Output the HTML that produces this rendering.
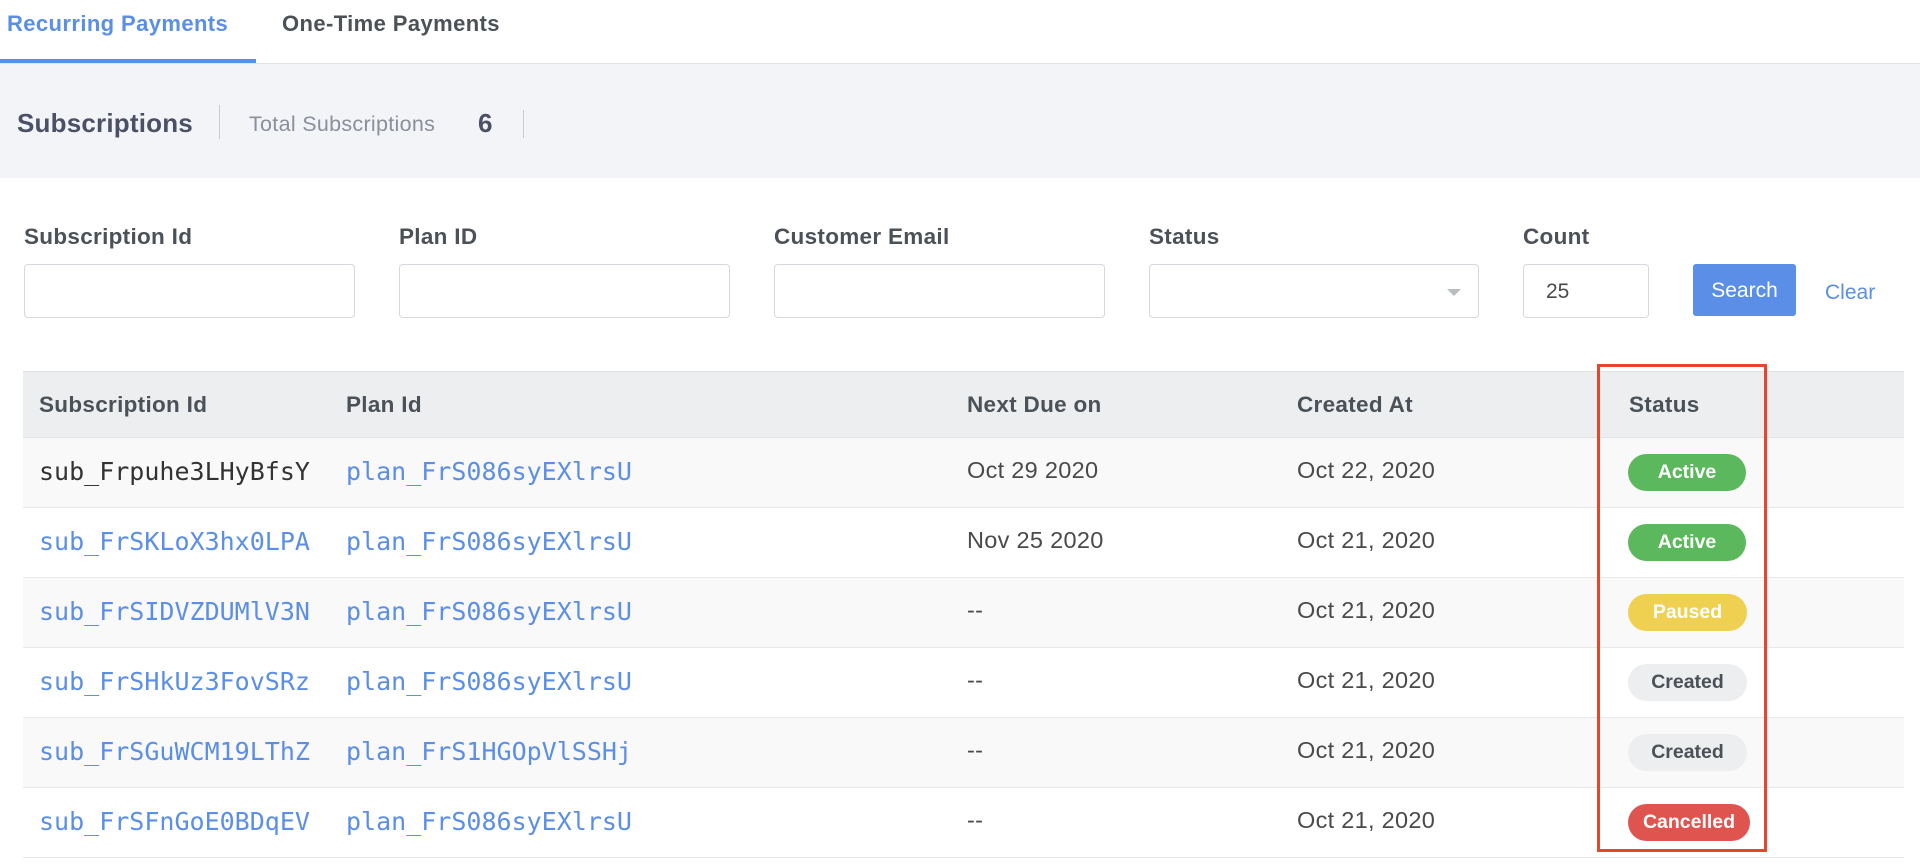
<!DOCTYPE html>
<html><head><meta charset="utf-8"><style>
*{box-sizing:border-box;margin:0;padding:0}
body{width:1920px;height:868px;background:#fff;font-family:"Liberation Sans",sans-serif;position:relative;overflow:hidden;color:#4b5157}
.a{position:absolute;white-space:nowrap}
.tab{font-size:22px;font-weight:bold;top:11px;letter-spacing:0.4px}
.lbl{font-size:22.5px;font-weight:bold;top:224px;color:#4b5157;letter-spacing:0.3px}
.inp{position:absolute;top:264px;height:54px;border:1px solid #d5d8dc;border-radius:4px;background:#fff}
.th{font-size:22.5px;font-weight:bold;color:#4b5157;top:392px;letter-spacing:0.3px}
.row{position:absolute;left:23px;width:1881px;height:70px;border-bottom:1px solid #e6e8ea}
.mono{font-family:"DejaVu Sans Mono","Liberation Mono",monospace;font-size:25px;color:#5b8ee6}
.txt{font-size:23.5px;color:#4a4a4a;letter-spacing:0.3px}
.badge{position:absolute;left:1628px;width:119px;height:37px;border-radius:19px;color:#fff;font-weight:bold;font-size:19.5px;text-align:center;line-height:37px}
</style></head><body>
<div class="a tab" style="left:7px;color:#5b8ee6">Recurring Payments</div>
<div class="a tab" style="left:282px;color:#4b5157">One-Time Payments</div>
<div class="a" style="left:0;top:59px;width:256px;height:4px;background:#5b8ee6"></div>
<div class="a" style="left:0;top:63px;width:1920px;height:1px;background:#e0e3e6"></div>
<div class="a" style="left:0;top:64px;width:1920px;height:114px;background:#f3f4f7"></div>
<div class="a" style="left:17px;top:108px;font-size:26px;font-weight:bold;color:#4c5066;letter-spacing:0.2px">Subscriptions</div>
<div class="a" style="left:219px;top:105px;width:1px;height:34px;background:#c8ccd0"></div>
<div class="a" style="left:249px;top:112px;font-size:21.5px;color:#8a8f99;letter-spacing:0.3px">Total Subscriptions</div>
<div class="a" style="left:478px;top:108px;font-size:26px;font-weight:bold;color:#4c5066">6</div>
<div class="a" style="left:523px;top:110px;width:1px;height:28px;background:#c8ccd0"></div>

<div class="a lbl" style="left:24px">Subscription Id</div>
<div class="a lbl" style="left:399px">Plan ID</div>
<div class="a lbl" style="left:774px">Customer Email</div>
<div class="a lbl" style="left:1149px">Status</div>
<div class="a lbl" style="left:1523px">Count</div>
<div class="inp" style="left:24px;width:331px"></div>
<div class="inp" style="left:399px;width:331px"></div>
<div class="inp" style="left:774px;width:331px"></div>
<div class="inp" style="left:1149px;width:330px"></div>
<div class="a" style="left:1447px;top:289px;width:0;height:0;border-left:7px solid transparent;border-right:7px solid transparent;border-top:7px solid #b9bcc0"></div>
<div class="inp" style="left:1523px;width:126px"></div>
<div class="a" style="left:1546px;top:280px;font-size:21px;color:#4a4a4a">25</div>
<div class="a" style="left:1693px;top:264px;width:103px;height:52px;background:#5b8ee6;border-radius:3px;color:#fff;font-size:21px;text-align:center;line-height:54px">Search</div>
<div class="a" style="left:1825px;top:281px;font-size:21px;color:#5b8ee6">Clear</div>

<div class="a" style="left:23px;top:371px;width:1881px;height:67px;background:#eceef0;border-top:1px solid #e0e3e6;border-bottom:1px solid #e0e3e6"></div>
<div class="a th" style="left:39px">Subscription Id</div>
<div class="a th" style="left:346px">Plan Id</div>
<div class="a th" style="left:967px">Next Due on</div>
<div class="a th" style="left:1297px">Created At</div>
<div class="a th" style="left:1629px">Status</div>

<div class="row" style="top:438px;background:#f9f9f9"></div>
<div class="row" style="top:508px;background:#fff"></div>
<div class="row" style="top:578px;background:#f9f9f9"></div>
<div class="row" style="top:648px;background:#fff"></div>
<div class="row" style="top:718px;background:#f9f9f9"></div>
<div class="row" style="top:788px;background:#fff"></div>

<div class="a mono" style="left:39px;top:457px;color:#333">sub_Frpuhe3LHyBfsY</div>
<div class="a mono" style="left:39px;top:527px">sub_FrSKLoX3hx0LPA</div>
<div class="a mono" style="left:39px;top:597px">sub_FrSIDVZDUMlV3N</div>
<div class="a mono" style="left:39px;top:667px">sub_FrSHkUz3FovSRz</div>
<div class="a mono" style="left:39px;top:737px">sub_FrSGuWCM19LThZ</div>
<div class="a mono" style="left:39px;top:807px">sub_FrSFnGoE0BDqEV</div>

<div class="a mono" style="left:346px;top:457px">plan_FrS086syEXlrsU</div>
<div class="a mono" style="left:346px;top:527px">plan_FrS086syEXlrsU</div>
<div class="a mono" style="left:346px;top:597px">plan_FrS086syEXlrsU</div>
<div class="a mono" style="left:346px;top:667px">plan_FrS086syEXlrsU</div>
<div class="a mono" style="left:346px;top:737px">plan_FrS1HGOpVlSSHj</div>
<div class="a mono" style="left:346px;top:807px">plan_FrS086syEXlrsU</div>

<div class="a txt" style="left:967px;top:457px">Oct 29 2020</div>
<div class="a txt" style="left:967px;top:527px">Nov 25 2020</div>
<div class="a txt" style="left:967px;top:597px">--</div>
<div class="a txt" style="left:967px;top:667px">--</div>
<div class="a txt" style="left:967px;top:737px">--</div>
<div class="a txt" style="left:967px;top:807px">--</div>

<div class="a txt" style="left:1297px;top:457px">Oct 22, 2020</div>
<div class="a txt" style="left:1297px;top:527px">Oct 21, 2020</div>
<div class="a txt" style="left:1297px;top:597px">Oct 21, 2020</div>
<div class="a txt" style="left:1297px;top:667px">Oct 21, 2020</div>
<div class="a txt" style="left:1297px;top:737px">Oct 21, 2020</div>
<div class="a txt" style="left:1297px;top:807px">Oct 21, 2020</div>

<div class="badge" style="top:454px;left:1628px;width:118px;background:#5cb85c">Active</div>
<div class="badge" style="top:524px;left:1628px;width:118px;background:#5cb85c">Active</div>
<div class="badge" style="top:594px;background:#f0d050">Paused</div>
<div class="badge" style="top:664px;background:#eceef0;color:#4b5157">Created</div>
<div class="badge" style="top:734px;background:#eceef0;color:#4b5157">Created</div>
<div class="badge" style="top:804px;width:122px;background:#e0544f">Cancelled</div>

<div class="a" style="left:1597px;top:364px;width:170px;height:488px;border:3px solid #e8452f"></div>
</body></html>
